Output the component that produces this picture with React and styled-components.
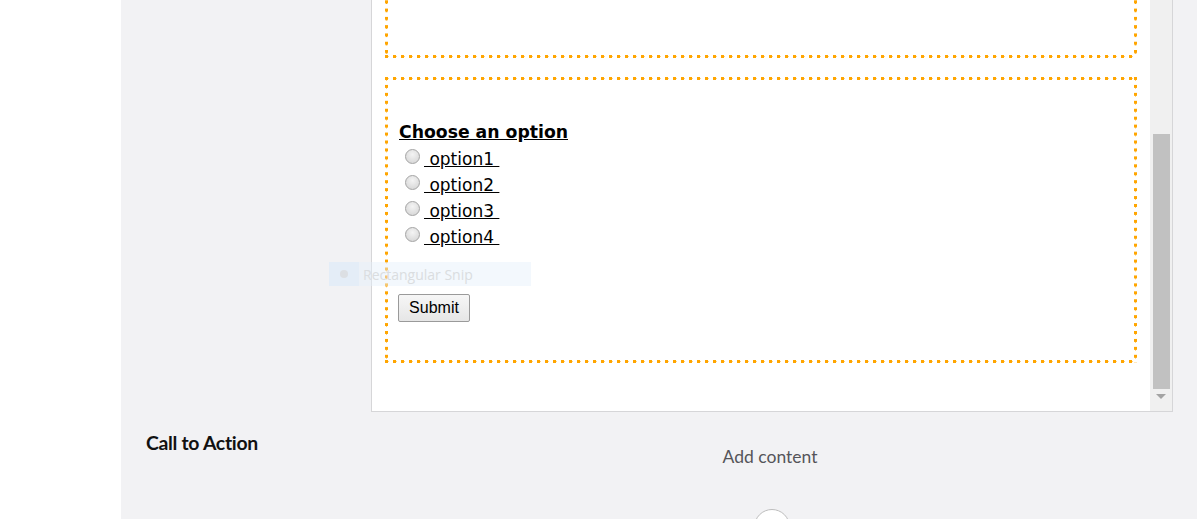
import React from 'react';
import styled, { createGlobalStyle } from 'styled-components';

const GlobalStyle = createGlobalStyle`
	html, body {
		margin: 0;
		padding: 0;
		background: #ffffff;
		overflow: hidden;
	}
	#root {
		height: 519px;
	}
`;

const Page = styled.div`
	display: flex;
	height: 519px;
	overflow: hidden;
`;

const SideGap = styled.div`
	width: 121px;
	flex: none;
	background: #ffffff;
`;

const Main = styled.main`
	flex: 1;
	background: #f2f2f4;
	position: relative;
	display: flex;
	flex-direction: column;
`;

const FrameRow = styled.div`
	padding-left: 250px;
`;

const Frame = styled.div`
	width: 800px;
	height: 411px;
	background: #ffffff;
	border: 1px solid #d6d6d8;
	border-top: none;
	display: flex;
`;

const FrameBody = styled.div`
	flex: 1;
	padding: 0 13px;
`;

// dotted orange frame, drawn as round dots every ~8px
const dot = 'radial-gradient(circle at 1.6px 1.6px, #ffa500 1.7px, rgba(255,165,0,0) 2.1px)';

const DottedBox = styled.div`
	box-sizing: border-box;
	height: ${p => p.$cut ? '58px' : '286px'};
	margin-top: ${p => p.$cut ? '0' : '19px'};
	padding: 46px 14px 0;
	background-image: ${p => p.$cut ? `${dot}, ${dot}, ${dot}` : `${dot}, ${dot}, ${dot}, ${dot}`};
	background-size: ${p => p.$cut ? '8px 3.2px, 3.2px 8px, 3.2px 8px' : '8px 3.2px, 8px 3.2px, 3.2px 8px, 3.2px 8px'};
	background-position: ${p => p.$cut
		? 'left bottom, left bottom, right bottom'
		: 'left top, left bottom, left top, right top'};
	background-repeat: ${p => p.$cut
		? 'round no-repeat, no-repeat round, no-repeat round'
		: 'round no-repeat, round no-repeat, no-repeat round, no-repeat round'};
`;

const Heading = styled.div`
	font-family: "DejaVu Sans", Verdana, sans-serif;
	font-weight: bold;
	font-size: 17.25px;
	line-height: 19px;
	color: #000;
	text-decoration: underline;
	margin-bottom: 4px;
`;

const OptionRow = styled.label`
	display: flex;
	align-items: center;
	height: 26px;
	padding-left: 6px;
`;

const Radio = styled.span`
	width: 13px;
	height: 13px;
	border-radius: 50%;
	border: 1px solid #a4a4a4;
	background: radial-gradient(circle at 50% 35%, #f4f4f4 0%, #dcdcdc 70%, #cfcfcf 100%);
	flex: none;
	margin-top: -6px;
`;

const OptionText = styled.span`
	font-family: "DejaVu Sans", Verdana, sans-serif;
	font-size: 17px;
	line-height: 20px;
	color: #000;
	text-decoration: underline;
	white-space: pre;
	margin-left: 4px;
`;

const SubmitButton = styled.button`
	margin-top: 44px;
	margin-left: -1px;
	width: 72px;
	height: 28px;
	font-family: "Liberation Sans", Arial, sans-serif;
	font-size: 16px;
	color: #000;
	background: linear-gradient(#f6f6f6, #e6e6e6);
	border: 1px solid #9a9a9a;
	border-radius: 2px;
	padding: 0;
`;

const ScrollTrack = styled.div`
	width: 22px;
	flex: none;
	background: #f0f0f0;
	display: flex;
	flex-direction: column;
	align-items: center;
`;

const ScrollThumb = styled.div`
	margin-top: 134px;
	width: 17px;
	height: 255px;
	background: #c1c1c1;
`;

const ScrollArrow = styled.div`
	margin-top: 5px;
	width: 0;
	height: 0;
	border-left: 5px solid transparent;
	border-right: 5px solid transparent;
	border-top: 5px solid #a3a3a3;
`;

const BottomRow = styled.div`
	display: flex;
	margin-top: 19px;
`;

const RowLabel = styled.div`
	width: 225px;
	padding-left: 25px;
	font-family: Lato, "Open Sans", sans-serif;
	font-weight: bold;
	font-size: 19.4px;
	letter-spacing: -0.3px;
	color: #111;
`;

const RowContent = styled.div`
	width: 802px;
	display: flex;
	flex-direction: column;
	align-items: center;
	padding-top: 15px;
`;

const AddContent = styled.div`
	font-family: Lato, "Open Sans", sans-serif;
	font-size: 17.5px;
	color: #555559;
	margin-left: -4px;
`;

const AddCircle = styled.div`
	margin-top: 42px;
	width: 34px;
	height: 34px;
	border-radius: 50%;
	background: #ffffff;
	border: 1px solid #bdbdbd;
`;

const SnipTip = styled.div`
	position: absolute;
	left: 208px;
	top: 262px;
	width: 202px;
	height: 24px;
	display: flex;
	align-items: center;
	background: rgba(228, 240, 250, 0.45);
	pointer-events: none;
`;

const SnipIcon = styled.div`
	width: 30px;
	height: 24px;
	display: flex;
	align-items: center;
	justify-content: center;
	background: rgba(215, 230, 245, 0.35);
	&::after {
		content: '';
		width: 8px;
		height: 8px;
		border-radius: 50%;
		background: #dcdfe3;
	}
`;

const SnipLabel = styled.span`
	margin-left: 4px;
	font-family: "Open Sans", sans-serif;
	font-size: 14px;
	color: #dadde0;
`;

const options = ['option1', 'option2', 'option3', 'option4'];

export default function App() {
	return (
		<Page>
			<GlobalStyle />
			<SideGap />
			<Main>
				<FrameRow>
					<Frame>
						<FrameBody>
							<DottedBox $cut />
							<DottedBox>
								<Heading>Choose an option</Heading>
								{options.map(o => (
									<OptionRow key={o}>
										<Radio />
										<OptionText>{` ${o} `}</OptionText>
									</OptionRow>
								))}
								<SubmitButton>Submit</SubmitButton>
							</DottedBox>
						</FrameBody>
						<ScrollTrack>
							<ScrollThumb />
							<ScrollArrow />
						</ScrollTrack>
					</Frame>
				</FrameRow>
				<BottomRow>
					<RowLabel>Call to Action</RowLabel>
					<RowContent>
						<AddContent>Add content</AddContent>
						<AddCircle />
					</RowContent>
				</BottomRow>
				<SnipTip>
					<SnipIcon />
					<SnipLabel>Rectangular Snip</SnipLabel>
				</SnipTip>
			</Main>
		</Page>
	);
}
